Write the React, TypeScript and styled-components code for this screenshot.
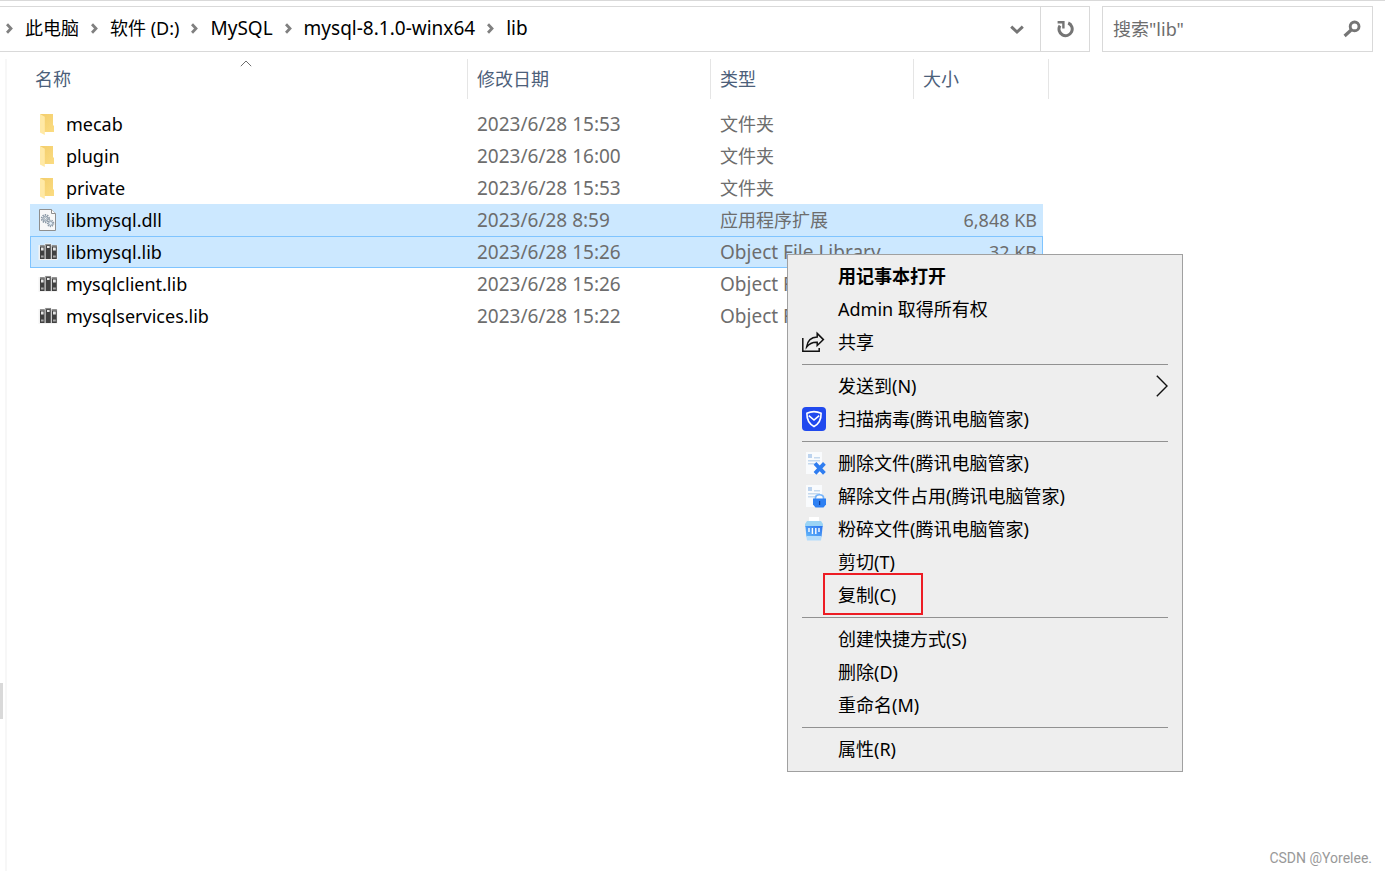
import React from "react";
import styled, { createGlobalStyle } from "styled-components";

const GlobalStyle = createGlobalStyle`
  * { box-sizing: border-box; }
  body {
    margin: 0;
    background: #fff;
    color: #000;
    font-family: "Noto Sans", "Noto Sans CJK SC", sans-serif;
    font-size: 18px;
    line-height: 24px;
  }
  button, input { font: inherit; color: inherit; }
`;

const Window = styled.div`
  display: flex;
  flex-direction: column;
  min-height: 100vh;
  border-top: 1px solid #d9d9d9;
  position: relative;
`;

const TopBar = styled.header`
  display: flex;
  gap: 12px;
  margin: 5px 12px 7px 0;
`;

const AddressBar = styled.div`
  flex: 1;
  display: flex;
  height: 46px;
  border: 1px solid #d9d9d9;
  border-left: 0;
`;

const Crumbs = styled.ol`
  flex: 1;
  display: flex;
  align-items: center;
  gap: 12px;
  margin: 0;
  padding: 0 0 2px 6px;
  list-style: none;
`;

const Crumb = styled.li`
  display: flex;
  align-items: center;
  gap: 12px;
  white-space: nowrap;
`;

const CrumbLink = styled.a<{ $latin?: boolean }>`
  color: #000;
  text-decoration: none;
  font-size: ${(p) => (p.$latin ? 19 : 18)}px;
`;

const BarButton = styled.button<{ $divided?: boolean }>`
  display: flex;
  align-items: center;
  justify-content: center;
  width: ${(p) => (p.$divided ? 49 : 47)}px;
  padding: 0;
  border: 0;
  border-left: ${(p) => (p.$divided ? "1px solid #d9d9d9" : "0")};
  background: none;
`;

const SearchBox = styled.form`
  display: flex;
  width: 271px;
  height: 46px;
  border: 1px solid #d9d9d9;
`;

const SearchInput = styled.input`
  flex: 1;
  min-width: 0;
  padding: 0 0 1px 10px;
  border: 0;
  outline: 0;
  background: none;
  &::placeholder { color: #6d6d6d; opacity: 1; }
`;

const SearchButton = styled.button`
  display: flex;
  align-items: center;
  justify-content: center;
  width: 40px;
  padding: 0;
  border: 0;
  background: none;
`;

const Body = styled.div`
  flex: 1;
  display: flex;
  margin-bottom: 2px;
`;

const NavEdge = styled.aside`
  display: flex;
  flex-direction: column;
  width: 7px;
  border-right: 2px solid #f7f7f7;
`;

const ScrollThumb = styled.div`
  width: 3px;
  height: 36px;
  margin-top: 624px;
  background: #d9d9d9;
`;

const Files = styled.main`
  flex: 1;
  min-width: 0;
  padding-left: 23px;
`;

const FileTable = styled.table`
  width: 1019px;
  table-layout: fixed;
  border-collapse: separate;
  border-spacing: 0;
`;

const HeadCell = styled.th`
  position: relative;
  height: 40px;
  padding: 0 0 0 9px;
  border-right: 1px solid #e5e5e5;
  text-align: left;
  font-weight: 400;
  &:first-child { padding-left: 5px; }
`;

const HeadButton = styled.button`
  display: block;
  padding: 0;
  border: 0;
  background: none;
  color: #4c607a;
`;

const SortMark = styled.svg`
  position: absolute;
  top: 1px;
  left: 0;
  right: 6px;
  margin: 0 auto;
`;

const Spacer = styled.tbody`
  td { height: 9px; padding: 0; }
`;

const FileRow = styled.tr<{ $selected?: boolean }>`
  td { background: ${(p) => (p.$selected ? "#cce8ff" : "transparent")}; }
`;

const Cell = styled.td<{ $focused?: boolean; $edge?: "left" | "right" }>`
  height: 32px;
  padding: 0 0 0 9px;
  color: #6d6d6d;
  white-space: nowrap;
  border: 0 solid #7fc4ff;
  border-width: ${(p) =>
    p.$focused
      ? `1px ${p.$edge === "right" ? 1 : 0}px 1px ${p.$edge === "left" ? 1 : 0}px`
      : "0"};
`;

const NameCell = styled(Cell)`
  padding-left: ${(p) => (p.$focused ? 5 : 6)}px;
  color: #000;
`;

const SizeCell = styled(Cell)`
  padding: 0 ${(p) => (p.$focused ? 5 : 6)}px 0 0;
  text-align: right;
`;

const FileName = styled.span`
  display: flex;
  align-items: center;
  gap: 6px;
`;

const Latin = styled.span`
  font-size: 19px;
`;

const Menu = styled.div`
  position: absolute;
  top: 253px;
  left: 787px;
  width: 396px;
  padding: 5px 0;
  border: 1px solid #a0a0a0;
  background: #eee;
`;

const MenuItem = styled.button<{ $bold?: boolean }>`
  display: flex;
  align-items: center;
  width: 100%;
  height: 33px;
  padding: 0 14px 2px;
  border: 0;
  background: none;
  color: #000;
  text-align: left;
  font-weight: ${(p) => (p.$bold ? 700 : 400)};
`;

const IconSlot = styled.span`
  display: flex;
  width: 24px;
  height: 24px;
  margin-right: 12px;
`;

const MenuLabel = styled.span`
  flex: 1;
  position: relative;
`;

const Highlight = styled.span`
  position: absolute;
  top: -10px;
  left: -15px;
  width: 100px;
  height: 42px;
  border: 2px solid #ed1c24;
`;

const Separator = styled.hr`
  height: 1px;
  margin: 5px 14px;
  border: 0;
  background: #919191;
`;

const Watermark = styled.footer`
  position: absolute;
  right: 13px;
  bottom: 5px;
  color: #999;
  font-family: Roboto, sans-serif;
  font-size: 14px;
  line-height: 20px;
`;

const Chevron = () => (
  <svg width="7" height="12" viewBox="0 0 7 12" fill="none" stroke="#808080" strokeWidth="2.8">
    <path d="M1 2.2 5 6.5 1 10.8" />
  </svg>
);

const DownIcon = () => (
  <svg width="14" height="12" viewBox="0 0 14 12" fill="none" stroke="#757575" strokeWidth="3">
    <path d="M1.2 3.6 7 9 12.8 3.6" />
  </svg>
);

const RefreshIcon = () => (
  <svg width="18" height="18" viewBox="0 0 18 18" fill="none" stroke="#757575">
    <path d="M12.2 3A6.6 6.6 0 1 1 4 5.6" strokeWidth="3" />
    <path d="M1.6 2.2H7.4V8.4" strokeWidth="2.4" />
  </svg>
);

const SearchIcon = () => (
  <svg width="18" height="18" viewBox="0 0 18 18" fill="none" stroke="#757575">
    <circle cx="11.6" cy="6.4" r="4.4" strokeWidth="2.9" />
    <path d="M8.4 9.8 1.6 16" strokeWidth="3.2" />
  </svg>
);

const FolderIcon = () => (
  <svg width="24" height="24" viewBox="0 0 24 24">
    <defs>
      <linearGradient id="folder" x1="0" y1="0" x2="1" y2="1">
        <stop offset="0" stopColor="#f3cd6b" />
        <stop offset="1" stopColor="#fbdc82" />
      </linearGradient>
    </defs>
    <path d="M4 2H17V13L18 14V20H8Z" fill="url(#folder)" />
    <path d="M4 2 8.8 4.8V23L4 20.4Z" fill="#ffe9a6" />
  </svg>
);

const DllIcon = () => (
  <svg width="24" height="24" viewBox="0 0 24 24" fill="none">
    <path d="M3.5 1.5H15.5L19.5 5.5V22.5H3.5Z" fill="#f8f8f8" stroke="#8e8e8e" />
    <path d="M15.5 1.5V5.5H19.5" fill="#fff" stroke="#8e8e8e" />
    <circle cx="9.4" cy="10.6" r="3.8" stroke="#8b99a6" strokeWidth="1.6" strokeDasharray="1.4 1" />
    <circle cx="9.4" cy="10.6" r="2.6" fill="#d5dce2" stroke="#8b99a6" />
    <circle cx="9.4" cy="10.6" r="1" fill="#fff" stroke="#8b99a6" strokeWidth=".7" />
    <circle cx="14.6" cy="15.4" r="3" stroke="#8b99a6" strokeWidth="1.5" strokeDasharray="1.2 .9" />
    <circle cx="14.6" cy="15.4" r="2" fill="#e2eef8" stroke="#8b99a6" strokeWidth=".9" />
  </svg>
);

const LibIcon = () => (
  <svg width="24" height="24" viewBox="0 0 24 24">
    <path d="M2.5 5H8.5V3.5H15.5V5H21.5V20H2.5Z" fill="#f3f3f3" />
    <path d="M4 5.5H8.6V19H4ZM9.6 4H14.8V19H9.6ZM15.8 5.5H20.8V19H15.8Z" fill="#404040" />
    <path d="M4 5.5H8.6V6.7H4ZM9.6 4H14.8V5.2H9.6ZM15.8 5.5H20.8V6.7H15.8Z" fill="#8c8c8c" />
    <path d="M5 7.5H7.6V10.5H5ZM11 6H13.6V8H11ZM17 7.5H19.8V10.5H17Z" fill="#e6e6e6" />
    <path d="M5 15.5H7.6V17.5H5ZM17 15.5H19.8V17.5H17Z" fill="#a8a8a8" />
  </svg>
);

const ShareIcon = () => (
  <svg width="24" height="24" viewBox="0 0 24 24" fill="none" stroke="#111" strokeWidth="1.5">
    <path d="M.8 8V21.2H17.2V18" />
    <path d="M15.2 3.4 21.4 9.6 15.2 15.6V12.2C10.4 12 7.4 13.2 4.6 17C5.4 10.8 9 7.2 15.2 7Z" />
  </svg>
);

const ShieldIcon = () => (
  <svg width="24" height="24" viewBox="0 0 24 24" fill="none">
    <rect width="24" height="24" rx="4" fill="#2049ee" />
    <path
      d="M12 4.6C9.6 4.6 7 5.2 4.9 6.2C4.7 12.2 6.8 16.6 12 19.5C17.2 16.6 19.3 12.2 19.1 6.2C17 5.2 14.4 4.6 12 4.6Z"
      stroke="#fff"
      strokeWidth="1.6"
    />
    <path d="M6.8 8.6 12 13 17.2 8.6" stroke="#fff" strokeWidth="1.6" />
  </svg>
);

const PageShape = () => (
  <>
    <path d="M4 1H20V23H4Z" fill="#f9fbfd" />
    <path d="M6 3H10V7H6Z" fill="#bcd3ee" />
    <path d="M12 6H18V7.4H12ZM6 9H18V10.4H6ZM6 12H15V13.4H6Z" fill="#c5d9ee" />
  </>
);

const DeleteFileIcon = () => (
  <svg width="24" height="24" viewBox="0 0 24 24">
    <PageShape />
    <path d="M13 12.4 22.4 22.4M22.4 12.4 13 22.4" stroke="#2f7df0" strokeWidth="3.8" />
  </svg>
);

const UnlockFileIcon = () => (
  <svg width="24" height="24" viewBox="0 0 24 24">
    <PageShape />
    <path d="M13.4 15.5V14C13.4 9.6 21.6 9.6 21.6 14V15.5" fill="none" stroke="#78b5fa" strokeWidth="1.6" />
    <path d="M11 14.5H24V20.5L21.5 23.5H13.5L11 20.5Z" fill="#2e80f2" />
    <path d="M17 17H18.2V21H17Z" fill="#123f9c" />
  </svg>
);

const ShredFileIcon = () => (
  <svg width="24" height="24" viewBox="0 0 24 24">
    <defs>
      <linearGradient id="bin" x1="0" y1="1" x2="1" y2="0">
        <stop offset="0" stopColor="#64b9fb" />
        <stop offset="1" stopColor="#2c74ee" />
      </linearGradient>
    </defs>
    <path d="M7 0H17V4H7Z" fill="#fff" />
    <path d="M5 4H19L21 7V10H3V7Z" fill="#9bd4f5" />
    <path d="M3.4 9H20.6L19.6 20H4.4Z" fill="url(#bin)" />
    <path d="M4.2 19H19.8L19 23.5H5Z" fill="#b4dcfb" />
    <path d="M7 11V15M10.4 11V17M13.8 11V17M17 11V15" stroke="#fff" strokeWidth="1.4" />
  </svg>
);

const SubmenuIcon = () => (
  <svg width="12" height="24" viewBox="0 0 12 24" fill="none" stroke="#111" strokeWidth="1.4">
    <path d="M.8 1.8 11 12 .8 22.2" />
  </svg>
);

const crumbs = [
  { text: "此电脑" },
  { text: "软件 (D:)" },
  { text: "MySQL", latin: true },
  { text: "mysql-8.1.0-winx64", latin: true },
  { text: "lib", latin: true },
];

type FileEntry = {
  icon: React.ReactNode;
  name: string;
  date: string;
  type: string;
  latinType?: boolean;
  size?: string;
  state?: "selected" | "focused";
};

const files: FileEntry[] = [
  { icon: <FolderIcon />, name: "mecab", date: "2023/6/28 15:53", type: "文件夹" },
  { icon: <FolderIcon />, name: "plugin", date: "2023/6/28 16:00", type: "文件夹" },
  { icon: <FolderIcon />, name: "private", date: "2023/6/28 15:53", type: "文件夹" },
  { icon: <DllIcon />, name: "libmysql.dll", date: "2023/6/28 8:59", type: "应用程序扩展", size: "6,848 KB", state: "selected" },
  { icon: <LibIcon />, name: "libmysql.lib", date: "2023/6/28 15:26", type: "Object File Library", latinType: true, size: "32 KB", state: "focused" },
  { icon: <LibIcon />, name: "mysqlclient.lib", date: "2023/6/28 15:26", type: "Object File Library", latinType: true },
  { icon: <LibIcon />, name: "mysqlservices.lib", date: "2023/6/28 15:22", type: "Object File Library", latinType: true },
];

type Item = { label: string; icon?: React.ReactNode; bold?: boolean; submenu?: boolean; marked?: boolean };

const menuGroups: Item[][] = [
  [{ label: "用记事本打开", bold: true }, { label: "Admin 取得所有权" }, { label: "共享", icon: <ShareIcon /> }],
  [
    { label: "发送到(N)", submenu: true },
    { label: "扫描病毒(腾讯电脑管家)", icon: <ShieldIcon /> },
  ],
  [
    { label: "删除文件(腾讯电脑管家)", icon: <DeleteFileIcon /> },
    { label: "解除文件占用(腾讯电脑管家)", icon: <UnlockFileIcon /> },
    { label: "粉碎文件(腾讯电脑管家)", icon: <ShredFileIcon /> },
    { label: "剪切(T)" },
    { label: "复制(C)", marked: true },
  ],
  [{ label: "创建快捷方式(S)" }, { label: "删除(D)" }, { label: "重命名(M)" }],
  [{ label: "属性(R)" }],
];

export default function App() {
  return (
    <Window>
      <GlobalStyle />
      <TopBar>
        <AddressBar>
          <Crumbs>
            {crumbs.map((c) => (
              <Crumb key={c.text}>
                <Chevron />
                <CrumbLink href="#" $latin={c.latin}>{c.text}</CrumbLink>
              </Crumb>
            ))}
          </Crumbs>
          <BarButton aria-label="以前的位置"><DownIcon /></BarButton>
          <BarButton $divided aria-label="刷新"><RefreshIcon /></BarButton>
        </AddressBar>
        <SearchBox role="search">
          <SearchInput type="text" placeholder={'搜索"lib"'} aria-label="搜索" />
          <SearchButton type="button" aria-label="开始搜索"><SearchIcon /></SearchButton>
        </SearchBox>
      </TopBar>

      <Body>
        <NavEdge><ScrollThumb /></NavEdge>
        <Files>
          <FileTable>
            <colgroup>
              <col width="438" />
              <col width="243" />
              <col width="203" />
              <col width="129" />
              <col width="6" />
            </colgroup>
            <thead>
              <tr>
                <HeadCell aria-sort="ascending">
                  <SortMark width="12" height="7" viewBox="0 0 12 7" fill="none" stroke="#6d6d6d">
                    <path d="M.8 6.2 6 1 11.2 6.2" />
                  </SortMark>
                  <HeadButton>名称</HeadButton>
                </HeadCell>
                <HeadCell><HeadButton>修改日期</HeadButton></HeadCell>
                <HeadCell><HeadButton>类型</HeadButton></HeadCell>
                <HeadCell colSpan={2}><HeadButton>大小</HeadButton></HeadCell>
              </tr>
            </thead>
            <Spacer aria-hidden="true"><tr><td colSpan={5} /></tr></Spacer>
            <tbody>
              {files.map((f) => {
                const focused = f.state === "focused";
                return (
                  <FileRow key={f.name} $selected={Boolean(f.state)}>
                    <NameCell $focused={focused} $edge="left"><FileName>{f.icon}{f.name}</FileName></NameCell>
                    <Cell $focused={focused}><Latin>{f.date}</Latin></Cell>
                    <Cell $focused={focused}>{f.latinType ? <Latin>{f.type}</Latin> : f.type}</Cell>
                    <SizeCell $focused={focused} $edge="right">{f.size}</SizeCell>
                  </FileRow>
                );
              })}
            </tbody>
          </FileTable>
        </Files>
      </Body>

      <Menu role="menu">
        {menuGroups.map((group, i) => (
          <React.Fragment key={i}>
            {i > 0 && <Separator />}
            {group.map((item) => (
              <MenuItem key={item.label} role="menuitem" $bold={item.bold}>
                <IconSlot>{item.icon}</IconSlot>
                <MenuLabel>
                  {item.label}
                  {item.marked && <Highlight />}
                </MenuLabel>
                {item.submenu && <SubmenuIcon />}
              </MenuItem>
            ))}
          </React.Fragment>
        ))}
      </Menu>

      <Watermark>CSDN @Yorelee.</Watermark>
    </Window>
  );
}
